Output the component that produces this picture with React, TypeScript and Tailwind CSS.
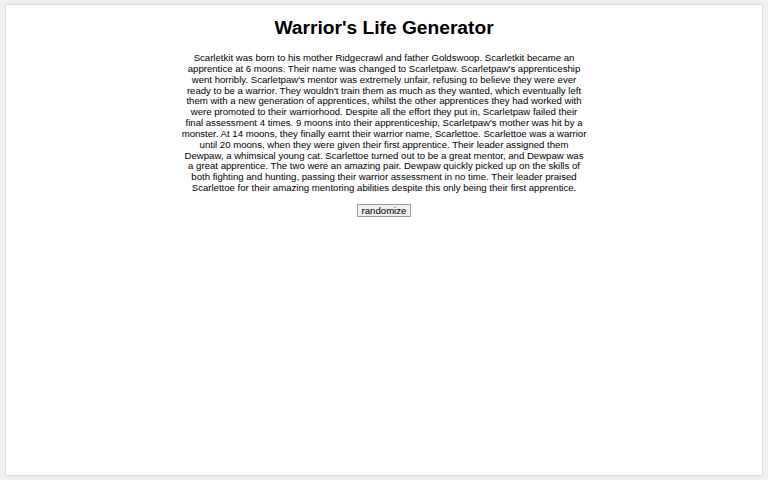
const story =
  "Scarletkit was born to his mother Ridgecrawl and father Goldswoop. Scarletkit became an apprentice at 6 moons. Their name was changed to Scarletpaw. Scarletpaw's apprenticeship went horribly. Scarletpaw's mentor was extremely unfair, refusing to believe they were ever ready to be a warrior. They wouldn't train them as much as they wanted, which eventually left them with a new generation of apprentices, whilst the other apprentices they had worked with were promoted to their warriorhood. Despite all the effort they put in, Scarletpaw failed their final assessment 4 times. 9 moons into their apprenticeship, Scarletpaw's mother was hit by a monster. At 14 moons, they finally earnt their warrior name, Scarlettoe. Scarlettoe was a warrior until 20 moons, when they were given their first apprentice. Their leader assigned them Dewpaw, a whimsical young cat. Scarlettoe turned out to be a great mentor, and Dewpaw was a great apprentice. The two were an amazing pair. Dewpaw quickly picked up on the skills of both fighting and hunting, passing their warrior assessment in no time. Their leader praised Scarlettoe for their amazing mentoring abilities despite this only being their first apprentice.";

export default function App() {
  return (
    <div className="h-[480px] w-[768px] bg-[#efefef] p-[4px_5px_4px_5px] font-['Liberation_Sans',Arial,sans-serif] text-black">
      <div className="flex h-full flex-col items-center border border-[#dcdcdc] bg-white">
        <h1 className="mt-[12px] text-[19.2px] font-bold leading-[22px]">Warrior's Life Generator</h1>
        <p className="mt-[14px] w-[406px] text-center text-[9.6px] leading-[10.85px]">{story}</p>
        <button className="mt-[10px] border border-[#9a9a9a] bg-[#efefef] px-[4px] text-[9.6px] leading-[11px]">
          randomize
        </button>
      </div>
    </div>
  );
}
